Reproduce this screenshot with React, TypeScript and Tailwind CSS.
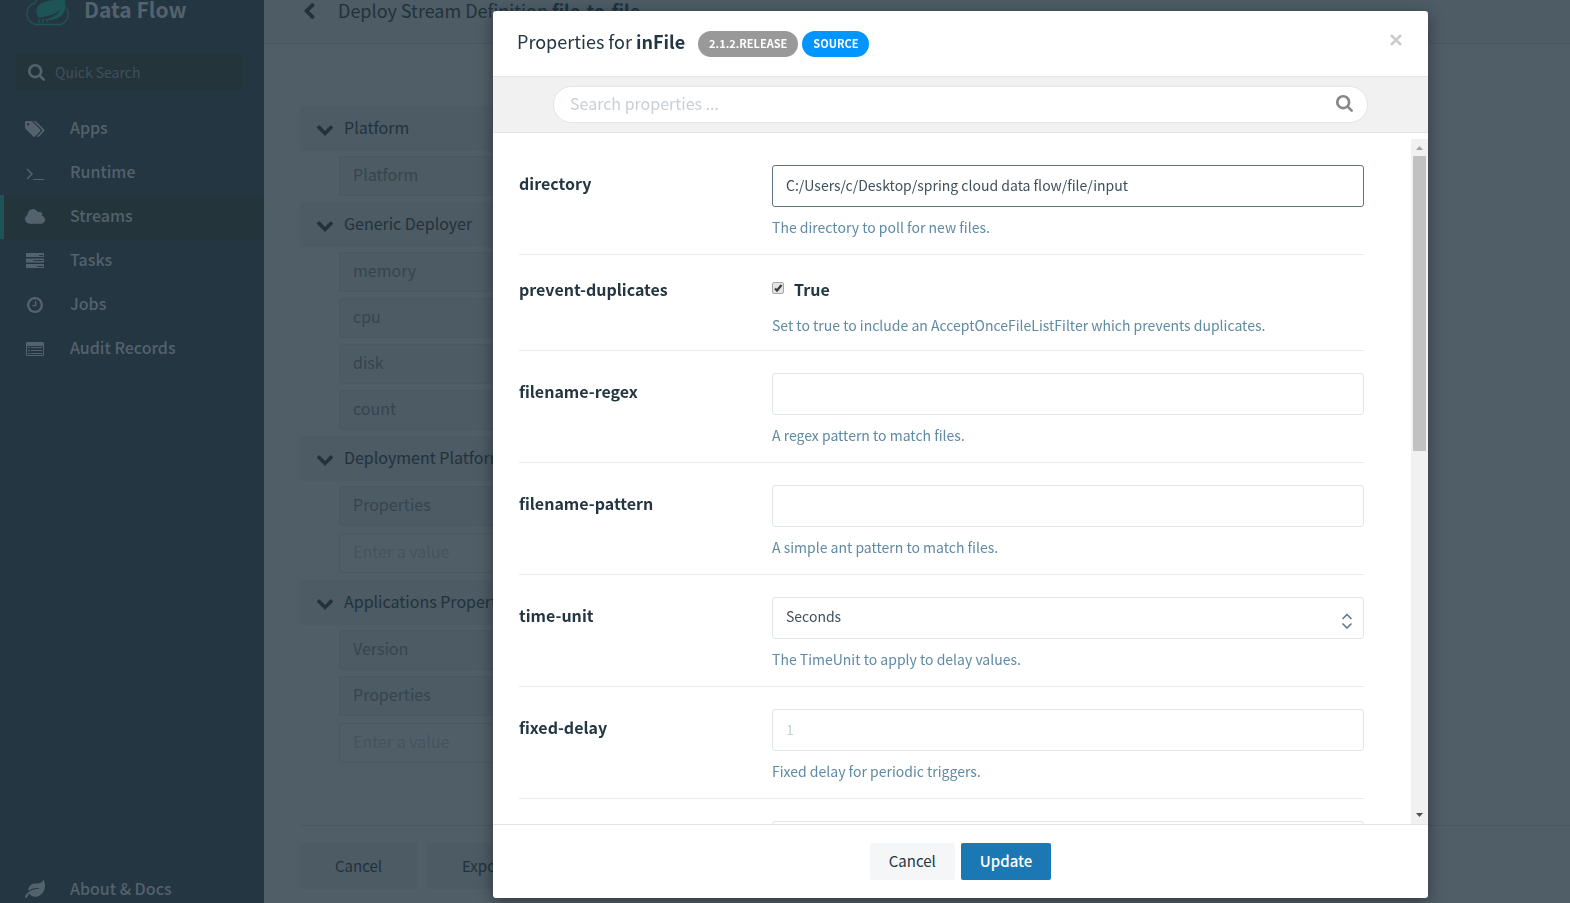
import { useState } from "react";
import type { ReactNode } from "react";
import { FaLeaf } from "react-icons/fa";

const SEARCH_PATH =
  "M1216 832q0-185-131.5-316.5t-316.5-131.5-316.5 131.5-131.5 316.5 131.5 316.5 316.5 131.5 316.5-131.5 131.5-316.5zm512 832q0 52-38 90t-90 38q-54 0-90-38l-343-342q-179 124-399 124-143 0-273.5-55.5t-225-150-150-225-55.5-273.5 55.5-273.5 150-225 225-150 273.5-55.5 273.5 55.5 225 150 150 225 55.5 273.5q0 220-124 399l343 343q37 37 37 90z";

function SearchIcon({ className }: { className?: string }) {
  return (
    <svg viewBox="64 128 1664 1664" fill="currentColor" className={className} aria-hidden="true">
      <path d={SEARCH_PATH} />
    </svg>
  );
}

function Chevron({ className }: { className?: string }) {
  return (
    <svg viewBox="0 0 1792 1792" fill="currentColor" className={className} aria-hidden="true">
      <path d="M1683 808l-742 741q-19 19-45 19t-45-19l-742-741q-19-19-19-45.5t19-45.5l166-165q19-19 45-19t45 19l531 531 531-531q19-19 45-19t45 19l166 165q19 19 19 45.5t-19 45.5z" />
    </svg>
  );
}

function Logo() {
  return (
    <svg viewBox="0 0 48 34" className="h-[34px] w-12 shrink-0 text-[#1d5556]" aria-hidden="true">
      <path
        d="M12 32.5a11 11 0 0 1-1-21.5A13.5 13.5 0 0 1 36 12a10.500 10.500 0 0 1 0 20.5z"
        fill="none"
        stroke="currentColor"
        strokeWidth="1.3"
      />
      <path
        d="M40 3c2 9 2 16-2 20-5 5-11 5-19 5 8-1 14-4 18-11-6 6-13 7-22 9-6-8-1-15 8-17 8-1 13-1 17-6z"
        fill="currentColor"
      />
      <path d="M15 27v4m4-4v4m4-4v3m4-5v3m4-5v3" stroke="currentColor" strokeWidth="1.3" />
    </svg>
  );
}

const navItems: { label: string; icon: ReactNode }[] = [
  {
    label: "Apps",
    icon: (
      <svg viewBox="0 128 1835 1536" fill="currentColor" className="h-4 w-5">
        <path d="M384 448q0-53-37.5-90.5t-90.5-37.5-90.5 37.5-37.5 90.5 37.5 90.5 90.5 37.5 90.5-37.5 37.5-90.5zm1067 576q0 53-37 90l-491 492q-39 37-91 37-53 0-90-37l-715-716q-38-37-64.5-101t-26.5-117v-416q0-52 38-90t90-38h416q53 0 117 26.5t102 64.5l715 714q37 39 37 91zm384 0q0 53-37 90l-491 492q-39 37-91 37-36 0-59-14t-53-45l470-470q37-37 37-90 0-52-37-91l-715-714q-38-38-102-64.5t-117-26.5h224q53 0 117 26.5t102 64.5l715 714q37 39 37 91z" />
      </svg>
    ),
  },
  {
    label: "Runtime",
    icon: (
      <svg viewBox="0 0 20 16" fill="none" stroke="currentColor" className="h-4 w-5">
        <path d="M2 4l5 5-5 5" strokeWidth="1.5" />
        <path d="M8 14.5h11" />
      </svg>
    ),
  },
  {
    label: "Streams",
    icon: (
      <svg viewBox="64 256 1920 1280" fill="currentColor" className="h-4 w-5">
        <path d="M1984 1152q0 159-112.5 271.5t-271.5 112.5h-1088q-185 0-316.5-131.5t-131.5-316.5q0-132 71-241.5t187-163.5q-2-28-2-43 0-212 150-362t362-150q158 0 286.5 88t187.5 230q70-62 166-62 106 0 181 75t75 181q0 75-41 138 129 30 213 134.5t84 239.5z" />
      </svg>
    ),
  },
  {
    label: "Tasks",
    icon: (
      <svg viewBox="0 0 20 16" fill="currentColor" className="h-4 w-5">
        <path
          fillRule="evenodd"
          d="M1 0h18v4H1zM14 2v1h4V2zM1 5.500h18v4H1zM8 7v1h10V7zM1 11h18v4H1zM12 13v1h6v-1z"
        />
      </svg>
    ),
  },
  {
    label: "Jobs",
    icon: (
      <svg viewBox="128 128 1536 1536" fill="currentColor" className="h-4 w-5">
        <path d="M1024 544v448q0 14-9 23t-23 9h-320q-14 0-23-9t-9-23v-64q0-14 9-23t23-9h224v-352q0-14 9-23t23-9h64q14 0 23 9t9 23zm416 352q0-148-73-273t-198-198-273-73-273 73-198 198-73 273 73 273 198 198 273 73 273-73 198-198 73-273zm224 0q0 209-103 385.5t-279.5 279.5-385.5 103-385.5-103-279.5-279.5-103-385.5 103-385.5 279.5-279.5 385.5-103 385.5 103 279.5 279.5 103 385.5z" />
      </svg>
    ),
  },
  {
    label: "Audit Records",
    icon: (
      <svg viewBox="0 0 20 16" fill="currentColor" className="h-4 w-5">
        <path
          fillRule="evenodd"
          d="M2.500 1h15q1.500 0 1.500 1.500v11q0 1.500-1.500 1.500h-15q-1.500 0-1.500-1.500v-11q0-1.500 1.500-1.500zM2 5v8.500q0 .5.500.5h15q.5 0 .5-.5V5z"
        />
        <path d="M3 6h2v1H3zM6 6h11v1H6zM3 9h2v1H3zM6 9h11v1H6zM3 12h2v1H3zM6 12h11v1H6z" />
      </svg>
    ),
  },
];

const groups = [
  { title: "Platform", items: ["Platform"] },
  { title: "Generic Deployer", items: ["memory", "cpu", "disk", "count"] },
  { title: "Deployment Platform", items: ["Properties"], editable: true },
  { title: "Applications Properties", items: ["Version", "Properties"], editable: true },
];

const inputClass =
  "block h-[42px] w-full rounded-[3px] border border-[#dfe5e9] bg-white px-[13px] pb-[3px] text-[14px] text-[#3f505b] outline-none placeholder:text-[#c3cfd5]";

function Sidebar() {
  return (
    <aside className="flex w-[264px] shrink-0 flex-col bg-[#243642] text-[#53626c]">
      <div className="-mt-2 flex h-[62px] items-start gap-3 pl-6">
        <Logo />
        <span className="text-[21px] font-bold leading-[34px]">Data Flow</span>
      </div>
      <label className="ml-4 mr-[21px] flex h-9 items-center bg-[#24343b] pl-3">
        <SearchIcon className="h-[17px] w-[17px]" />
        <input
          type="text"
          aria-label="Quick Search"
          placeholder="Quick Search"
          className="ml-[10px] w-36 bg-transparent text-[14px] outline-none placeholder:text-[#40505a]"
        />
      </label>
      <nav className="mt-[17px] flex flex-col">
        {navItems.map((item) => (
          <a
            key={item.label}
            href="#"
            className={
              item.label === "Streams"
                ? "flex h-11 items-center gap-[25px] border-l-4 border-[#1d5556] bg-[#24343b] pl-[21px] font-medium"
                : "flex h-11 items-center gap-[25px] border-l-4 border-transparent pl-[21px] font-medium"
            }
          >
            {item.icon}
            <span className="pb-1 text-[16px]">{item.label}</span>
          </a>
        ))}
      </nav>
      <a href="#" className="-mb-2 mt-auto flex h-11 shrink-0 items-center gap-[25px] pl-[25px] font-medium">
        <FaLeaf className="h-[18px] w-5" />
        <span className="pb-[2px] text-[16px]">About &amp; Docs</span>
      </a>
    </aside>
  );
}

function DeployPage() {
  return (
    <main className="flex min-w-0 flex-1 flex-col bg-[#505e67] text-[#22323c]">
      <header className="flex h-11 shrink-0 items-start gap-[18px] border-b border-[#485761] bg-[#4e5c65] pl-[38px]">
        <Chevron className="mt-[2px] h-[18px] w-[18px] rotate-90" />
        <h1 className="text-[18px] leading-5">
          Deploy Stream Definition <strong>file-to-file</strong>
        </h1>
      </header>
      <div className="min-h-0 flex-1 pl-9 pr-[180px] pt-[62px]">
        {groups.map((group) => (
          <section key={group.title}>
            <h2 className="mb-[5px] flex h-[45px] items-center gap-[10px] bg-[#4d5b64] pl-4 text-[16px]">
              <Chevron className="h-[18px] w-[18px]" />
              <span className="pb-[3px]">{group.title}</span>
            </h2>
            {group.items.map((item) => (
              <div
                key={item}
                className="mb-1.5 ml-[39px] flex h-10 items-center rounded-[3px] border border-[#495862] bg-[#4d5b64] px-[13px] pb-1 text-[16px] text-[#35454f]"
              >
                {item}
              </div>
            ))}
            {group.editable && (
              <div className="mb-[7px] mt-[7px] pl-[39px]">
                <input
                  type="text"
                  aria-label={group.title}
                  placeholder="Enter a value"
                  className="block h-10 w-full rounded-[3px] border border-[#495862] px-[13px] pb-1 text-[16px] placeholder:text-[#44545f]"
                />
              </div>
            )}
          </section>
        ))}
      </div>
      <footer className="ml-9 flex h-[78px] shrink-0 gap-[10px] border-t border-[#485761] pt-[17px] text-[15px]">
        <button type="button" className="h-[46px] bg-[#4d5b64] px-[35px]">
          Cancel
        </button>
        <button type="button" className="h-[46px] bg-[#4d5b64] px-[35px]">
          Export
        </button>
      </footer>
    </main>
  );
}

type FieldProps = { id: string; help: string; children: ReactNode; short?: boolean };

function Field({ id, help, children, short }: FieldProps) {
  return (
    <div
      className={
        short
          ? "flex h-24 border-b border-[#e8ebed] pt-[18px]"
          : "flex h-28 border-b border-[#e8ebed] pt-[22px]"
      }
    >
      <label
        htmlFor={id}
        className={
          short
            ? "w-[253px] shrink-0 text-[16px] font-bold leading-8"
            : "w-[253px] shrink-0 pt-[2px] text-[16px] font-bold leading-8"
        }
      >
        {id}
      </label>
      <div className="flex-1">
        {children}
        <p className="mt-1 text-[14px] leading-8 text-[#5f8aa3]">{help}</p>
      </div>
    </div>
  );
}

function ScrollBar() {
  return (
    <div className="flex w-[17px] shrink-0 flex-col items-center bg-[#f1f1f1]" aria-hidden="true">
      <svg viewBox="0 0 17 17" className="h-[17px] w-[17px] shrink-0">
        <path d="M5 11h7L8.500 7z" fill="#a3a3a3" />
      </svg>
      <div className="h-[43%] w-[13px] bg-[#c1c1c1]" />
      <svg viewBox="0 0 17 17" className="mt-auto h-[17px] w-[17px] shrink-0">
        <path d="M5 6h7l-3.500 4z" fill="#505050" />
      </svg>
    </div>
  );
}

function PropertiesDialog() {
  const [directory, setDirectory] = useState("C:/Users/c/Desktop/spring cloud data flow/file/input");
  const [preventDuplicates, setPreventDuplicates] = useState(true);

  return (
    <div className="fixed inset-0 flex pb-[5px] pl-[493px] pr-[142px] pt-[11px]">
      <div
        role="dialog"
        aria-label="Properties for inFile"
        className="flex min-w-0 flex-1 flex-col overflow-hidden rounded-[3px] bg-white text-[#243642] shadow-[0_4px_16px_rgba(0,0,0,0.4)]"
      >
        <header className="flex h-[66px] shrink-0 items-center border-b border-[#dfe5e9] px-6">
          <h2 className="mr-[13px] pb-[5px] text-[18px]">
            Properties for <strong>inFile</strong>
          </h2>
          <span className="mr-1 flex h-[26px] items-center rounded-full bg-[#999999] px-[11px] text-[11px] font-bold text-white">
            2.1.2.RELEASE
          </span>
          <span className="flex h-[26px] items-center rounded-full bg-[#0095ff] px-[11px] text-[11px] font-bold text-white">
            SOURCE
          </span>
          <button type="button" aria-label="Close" className="mb-2 ml-auto text-[#cccccc]">
            <svg viewBox="0 0 12 12" className="mr-[2px] h-3 w-3" stroke="currentColor" strokeWidth="2.5">
              <path d="M1 1l10 10M11 1L1 11" />
            </svg>
          </button>
        </header>
        <div className="shrink-0 border-b border-[#dfe5e9] bg-[#f1f1f1] px-[60px] py-[9px]">
          <label className="flex h-[37px] items-center rounded-full border border-[#dfe5e9] bg-white pl-4 pr-[14px]">
            <input
              type="text"
              aria-label="Search properties"
              placeholder="Search properties ..."
              className="min-w-0 flex-1 pb-[3px] text-[16px] outline-none placeholder:text-[#c8d0d5]"
            />
            <SearchIcon className="mb-[3px] h-[17px] w-[17px] text-[#888888]" />
          </label>
        </div>
        <div className="mt-1.5 flex min-h-0 flex-1">
          <form className="min-w-0 flex-1 overflow-hidden pl-[26px] pr-[47px] pt-1">
            <Field id="directory" help="The directory to poll for new files.">
              <input
                id="directory"
                type="text"
                value={directory}
                onChange={(e) => setDirectory(e.target.value)}
                className="block h-[42px] w-full rounded-[3px] border border-[#5d7482] bg-white px-[13px] pb-[3px] text-[14px] text-[#3f505b] outline-none"
              />
            </Field>
            <Field
              id="prevent-duplicates"
              help="Set to true to include an AcceptOnceFileListFilter which prevents duplicates."
              short
            >
              <label className="flex h-8 items-center text-[16px] font-bold">
                <span className="relative mb-[3px] mr-[10px] flex">
                  <input
                    id="prevent-duplicates"
                    type="checkbox"
                    checked={preventDuplicates}
                    onChange={(e) => setPreventDuplicates(e.target.checked)}
                    className="h-3 w-3 appearance-none rounded-[2px] border border-[#a8a8a8] bg-[#e4e4e4]"
                  />
                  {preventDuplicates && (
                    <svg viewBox="0 0 12 12" className="pointer-events-none absolute inset-0 h-3 w-3" fill="none">
                      <path d="M3 6.500l2 2L9.500 3" stroke="#3c3c3c" strokeWidth="2.2" />
                    </svg>
                  )}
                </span>
                True
              </label>
            </Field>
            <Field id="filename-regex" help="A regex pattern to match files.">
              <input id="filename-regex" type="text" className={inputClass} />
            </Field>
            <Field id="filename-pattern" help="A simple ant pattern to match files.">
              <input id="filename-pattern" type="text" className={inputClass} />
            </Field>
            <Field id="time-unit" help="The TimeUnit to apply to delay values.">
              <div className="relative">
                <select id="time-unit" defaultValue="Seconds" className={`${inputClass} appearance-none`}>
                  <option>Seconds</option>
                  <option>Minutes</option>
                  <option>Hours</option>
                </select>
                <svg
                  viewBox="0 0 10 16"
                  className="pointer-events-none absolute right-3 top-4 h-4 w-[10px]"
                  fill="none"
                  stroke="#5d7482"
                  strokeWidth="1.5"
                >
                  <path d="M.5 6L5 1.500 9.500 6M.5 10.500L5 15l4.500-4.500" />
                </svg>
              </div>
            </Field>
            <Field id="fixed-delay" help="Fixed delay for periodic triggers.">
              <input id="fixed-delay" type="text" placeholder="1" className={inputClass} />
            </Field>
            <Field id="initial-delay" help="Initial delay for periodic triggers.">
              <input id="initial-delay" type="text" className={inputClass} />
            </Field>
          </form>
          <ScrollBar />
        </div>
        <footer className="flex h-[74px] shrink-0 items-center justify-center gap-1.5 border-t border-[#dfe5e9] text-[15px]">
          <button type="button" className="h-[37px] rounded-[2px] bg-[#f4f6f8] px-[19px]">
            Cancel
          </button>
          <button type="button" className="h-[37px] rounded-[2px] bg-[#1c78b5] px-[19px] font-medium text-white">
            Update
          </button>
        </footer>
      </div>
    </div>
  );
}

export default function App() {
  return (
    <div className="flex h-screen overflow-hidden font-['Noto_Sans_CJK_SC','Noto_Sans',sans-serif]">
      <Sidebar />
      <DeployPage />
      <PropertiesDialog />
    </div>
  );
}
